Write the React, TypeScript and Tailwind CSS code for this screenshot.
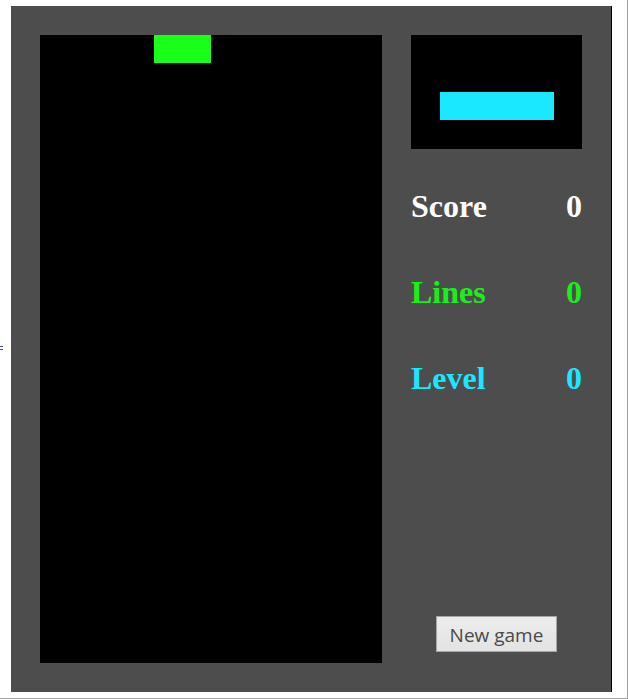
import React from "react";

type Stat = { label: string; value: number; color: string };

const stats: Stat[] = [
  { label: "Score", value: 0, color: "text-white" },
  { label: "Lines", value: 0, color: "text-[#1aef1a]" },
  { label: "Level", value: 0, color: "text-[#1ae8ff]" },
];

export default function App() {
  return (
    <div className="relative w-[628px] h-[699px] bg-white border-r border-b border-[#a0a0a0] overflow-hidden">
      {/* stray marker at left edge */}
      <div className="absolute left-0 top-[346px] flex flex-col gap-[2px]">
        <div className="w-[3px] h-px bg-[#3b4fc0]" />
        <div className="w-[3px] h-px bg-[#3b4fc0]" />
      </div>

      <div className="ml-[11px] mt-[6px] w-[601px] h-[686px] bg-[#4d4d4d] border-r border-black flex gap-[29px] pl-[29px] pt-[29px]">
        {/* Board */}
        <div className="relative w-[342px] h-[628px] bg-black shrink-0">
          <div className="absolute left-[114px] top-0 w-[57px] h-[28px] bg-[#19ff19]" />
        </div>

        {/* Side panel */}
        <div className="w-[171px] h-[628px] flex flex-col">
          <div className="relative w-[171px] h-[114px] bg-black">
            <div className="absolute left-[29px] top-[57px] w-[114px] h-[28px] bg-[#1ae8ff]" />
          </div>

          <div className="mt-[41px] flex flex-col gap-[54px] font-['Liberation_Serif','Times_New_Roman',serif] font-bold text-[32px] leading-[32px]">
            {stats.map((s) => (
              <div key={s.label} className={`flex justify-between ${s.color}`}>
                <span>{s.label}</span>
                <span>{s.value}</span>
              </div>
            ))}
          </div>

          <div className="mt-auto mb-[11px] flex justify-center">
            <button className="w-[121px] h-[36px] pt-[3px] border border-[#a6a6a6] bg-gradient-to-b from-[#ededed] to-[#e3e3e3] text-[#4a4a4a] text-[19px] leading-none font-['Open_Sans',sans-serif]">
              New game
            </button>
          </div>
        </div>
      </div>
    </div>
  );
}
